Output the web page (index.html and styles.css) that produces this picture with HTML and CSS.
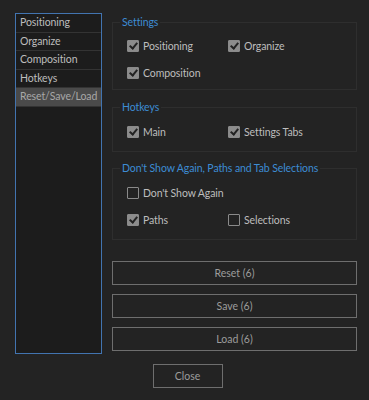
FILE: index.html
```html
<!DOCTYPE html>
<html lang="en">

<head>
    <meta charset="UTF-8">
    <title>Settings</title>
    <link rel="stylesheet" href="styles.css">
</head>

<body>
    <div class="janela">
        <div class="conteudo">
            <ul class="abas">
                <li>Positioning</li>
                <li>Organize</li>
                <li>Composition</li>
                <li>Hotkeys</li>
                <li class="ativa">Reset/Save/Load</li>
            </ul>

            <div class="painel">
                <fieldset class="grupo grupo-settings">
                    <legend>Settings</legend>
                    <label><span class="caixa marcada"></span>Positioning</label>
                    <label><span class="caixa marcada"></span>Organize</label>
                    <label><span class="caixa marcada"></span>Composition</label>
                </fieldset>

                <fieldset class="grupo grupo-hotkeys">
                    <legend>Hotkeys</legend>
                    <label><span class="caixa marcada"></span>Main</label>
                    <label><span class="caixa marcada"></span>Settings Tabs</label>
                </fieldset>

                <fieldset class="grupo grupo-dsa">
                    <legend>Don't Show Again, Paths and Tab Selections</legend>
                    <label class="linha-toda"><span class="caixa"></span>Don't Show Again</label>
                    <label><span class="caixa marcada"></span>Paths</label>
                    <label><span class="caixa"></span>Selections</label>
                </fieldset>

                <div class="acoes">
                    <button class="botao">Reset (6)</button>
                    <button class="botao">Save (6)</button>
                    <button class="botao">Load (6)</button>
                </div>
            </div>
        </div>

        <div class="rodape">
            <button class="botao fechar">Close</button>
        </div>
    </div>
</body>

</html>
```

FILE: styles.css
```css
body {
    margin: 0;
    background-color: #232323;
    font-family: Lato, "Open Sans", sans-serif;
    font-size: 10.5px;
    letter-spacing: -0.1px;
    color: #bdbdbd;
}

.janela {
    width: 369px;
    height: 400px;
    padding: 13px 12px 0 15px;
    box-sizing: border-box;
}

.conteudo {
    display: flex;
    align-items: flex-start;
    gap: 10px;
}

.abas {
    list-style: none;
    margin: 0;
    padding: 0;
    width: 87px;
    height: 341px;
    box-sizing: border-box;
    border: 1px solid #4274b0;
    background-color: #1c1c1c;
}

.abas li {
    height: 17.5px;
    line-height: 17.5px;
    padding-left: 4px;
    border-bottom: 1px solid #333;
    white-space: nowrap;
}

.abas .ativa {
    background-color: #4a4a4a;
    color: #a8a8a8;
}

.painel {
    flex: 1;
    display: flex;
    flex-direction: column;
}

.grupo {
    margin: 0;
    border: 1px solid #2e2e2e;
    padding: 9px 0 10px 14px;
    display: grid;
    grid-template-columns: 101px auto;
    row-gap: 9px;
    min-width: 0;
}

.grupo legend {
    color: #3d8cd4;
    line-height: 14px;
    padding: 0 2px;
    margin-left: -7px;
    white-space: nowrap;
}

.grupo-settings {
    margin-top: 2px;
    padding-top: 8px;
    padding-bottom: 7px;
}

.grupo-hotkeys {
    margin-top: 10px;
}

.grupo-dsa {
    margin-top: 9px;
}

.linha-toda {
    grid-column: 1 / span 2;
}

label {
    display: flex;
    align-items: center;
    gap: 4px;
    height: 18px;
    white-space: nowrap;
}

.caixa {
    width: 12px;
    height: 12px;
    box-sizing: border-box;
    border: 1px solid #8a8a8a;
    border-radius: 1px;
    position: relative;
}

.caixa.marcada {
    background-color: #8c8c8c;
}

.caixa.marcada::after {
    content: "";
    position: absolute;
    left: 3px;
    top: 0px;
    width: 3px;
    height: 6px;
    border: solid #222;
    border-width: 0 2px 2px 0;
    transform: rotate(40deg);
}

.acoes {
    display: flex;
    flex-direction: column;
    gap: 9px;
    margin-top: 21px;
}

.botao {
    height: 24px;
    background-color: #232323;
    border: 1.5px solid #6e6e6e;
    color: #9c9c9c;
    font-family: inherit;
    font-size: 10.5px;
    padding: 0;
}

.rodape {
    display: flex;
    justify-content: center;
    padding-top: 10px;
    padding-left: 3px;
}

.fechar {
    width: 70px;
    height: 24px;
}
```
